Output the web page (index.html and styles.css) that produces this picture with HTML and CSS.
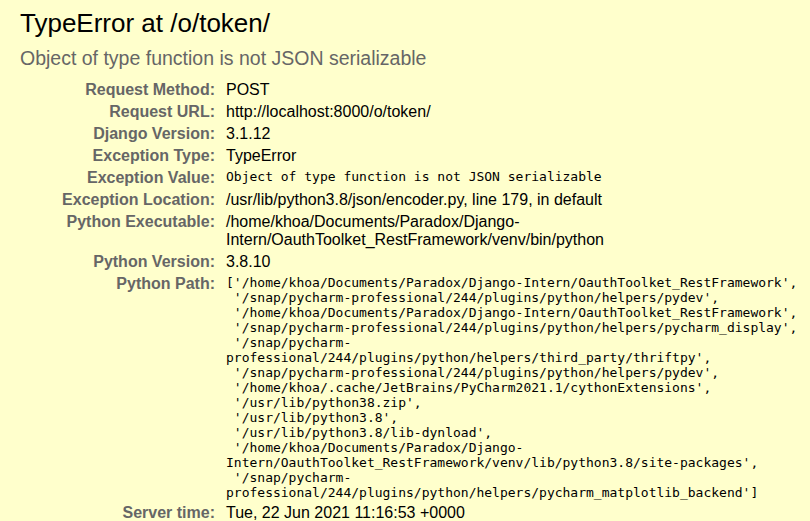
FILE: index.html
```html
<!DOCTYPE html>
<html lang="en">
<head>
<meta charset="utf-8">
<title>TypeError at /o/token/</title>
<link rel="stylesheet" href="styles.css">
</head>
<body>
<div class="summary">
  <h1 class="title">TypeError at /o/token/</h1>
  <pre class="exception-value">Object of type function is not JSON serializable</pre>
  <table class="meta">
    <tr><th>Request Method:</th><td>POST</td></tr>
    <tr><th>Request URL:</th><td>http://localhost:8000/o/token/</td></tr>
    <tr><th>Django Version:</th><td>3.1.12</td></tr>
    <tr><th>Exception Type:</th><td>TypeError</td></tr>
    <tr><th>Exception Value:</th><td><pre class="code">Object of type function is not JSON serializable</pre></td></tr>
    <tr><th>Exception Location:</th><td>/usr/lib/python3.8/json/encoder.py, line 179, in default</td></tr>
    <tr><th>Python Executable:</th><td>/home/khoa/Documents/Paradox/Django-Intern/OauthToolket_RestFramework/venv/bin/python</td></tr>
    <tr><th>Python Version:</th><td>3.8.10</td></tr>
    <tr><th>Python Path:</th><td><pre class="code">['/home/khoa/Documents/Paradox/Django-Intern/OauthToolket_RestFramework',
 '/snap/pycharm-professional/244/plugins/python/helpers/pydev',
 '/home/khoa/Documents/Paradox/Django-Intern/OauthToolket_RestFramework',
 '/snap/pycharm-professional/244/plugins/python/helpers/pycharm_display',
 '/snap/pycharm-professional/244/plugins/python/helpers/third_party/thriftpy',
 '/snap/pycharm-professional/244/plugins/python/helpers/pydev',
 '/home/khoa/.cache/JetBrains/PyCharm2021.1/cythonExtensions',
 '/usr/lib/python38.zip',
 '/usr/lib/python3.8',
 '/usr/lib/python3.8/lib-dynload',
 '/home/khoa/Documents/Paradox/Django-Intern/OauthToolket_RestFramework/venv/lib/python3.8/site-packages',
 '/snap/pycharm-professional/244/plugins/python/helpers/pycharm_matplotlib_backend']</pre></td></tr>
    <tr><th>Server time:</th><td>Tue, 22 Jun 2021 11:16:53 +0000</td></tr>
  </table>
</div>
</body>
</html>
```

FILE: styles.css
```css
* { margin: 0; padding: 0; }
html { background: #ffffcc; }
body {
  font-family: "Liberation Sans", Arial, sans-serif;
  font-size: 13px;
  color: #000;
  background: #ffffcc;
}
.summary {
  background: #ffffcc;
  padding: 10px 0 10px 20px;
}
.title {
  font-weight: normal;
  font-size: 26px;
  line-height: 27px;
}
.exception-value {
  font-family: "Liberation Sans", Arial, sans-serif;
  color: #666;
  font-size: 19.5px;
  line-height: 22px;
  margin: 10px 0;
  white-space: pre-wrap;
}
.meta {
  border: none;
  border-collapse: collapse;
  width: 100%;
  font-size: 16px;
  margin: 10px 0;
}
.meta th, .meta td {
  vertical-align: top;
  padding: 2px 3px;
  line-height: 18px;
}
.meta th {
  width: 12em;
  text-align: right;
  color: #666;
  padding-right: 8px;
  font-weight: bold;
}
.code {
  font-family: "DejaVu Sans Mono", monospace;
  font-size: 13px;
  line-height: 15px;
  white-space: pre-wrap;
}
```
